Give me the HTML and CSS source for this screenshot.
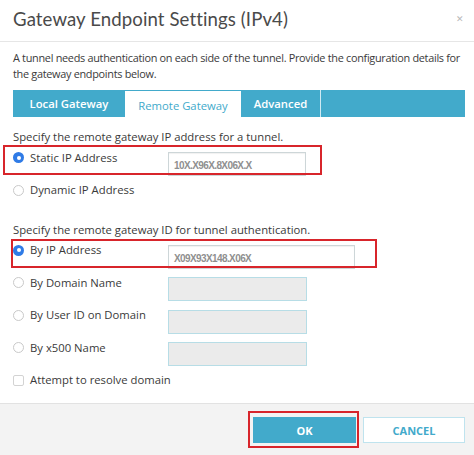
FILE: index.html
```html
<!DOCTYPE html>
<html>
<head>
<meta charset="utf-8">
<link rel="stylesheet" href="styles.css">
</head>
<body>
<div class="dialog">
  <div class="header">
    <h1 class="title">Gateway Endpoint Settings (IPv4)</h1>
    <span class="close">&#x2715;</span>
  </div>
  <div class="content">
    <p class="intro">A tunnel needs authentication on each side of the tunnel. Provide the configuration details for the gateway endpoints below.</p>
    <div class="tabs">
      <div class="tab tab-local">Local Gateway</div>
      <div class="tab tab-active">Remote Gateway</div>
      <div class="tab tab-adv">Advanced</div>
      <div class="tab-fill"></div>
    </div>

    <p class="section-label">Specify the remote gateway IP address for a tunnel.</p>
    <div class="row">
      <div class="mark mark-a"></div>
      <span class="radio checked"></span>
      <span class="label">Static IP Address</span>
      <div class="input filled w138"><span class="masked">10X.X96X.8X06X.X</span></div>
    </div>
    <div class="row">
      <span class="radio"></span>
      <span class="label">Dynamic IP Address</span>
    </div>

    <p class="section-label">Specify the remote gateway ID for tunnel authentication.</p>
    <div class="row">
      <div class="mark mark-b"></div>
      <span class="radio checked"></span>
      <span class="label">By IP Address</span>
      <div class="input filled w187"><span class="masked">X09X93X148.X06X</span></div>
    </div>
    <div class="row">
      <span class="radio"></span>
      <span class="label">By Domain Name</span>
      <div class="input disabled w139"></div>
    </div>
    <div class="row">
      <span class="radio"></span>
      <span class="label">By User ID on Domain</span>
      <div class="input disabled w139"></div>
    </div>
    <div class="row">
      <span class="radio"></span>
      <span class="label">By x500 Name</span>
      <div class="input disabled w139"></div>
    </div>
    <div class="row check-row">
      <span class="checkbox"></span>
      <span class="label label-wide">Attempt to resolve domain</span>
    </div>
  </div>
  <div class="footer">
    <div class="btn-wrap">
      <div class="mark mark-c"></div>
      <button class="btn btn-ok">OK</button>
    </div>
    <button class="btn btn-cancel">CANCEL</button>
  </div>
</div>
</body>
</html>
```

FILE: styles.css
```css
* { box-sizing: border-box; }
html, body { margin: 0; padding: 0; background: #fff; }
body {
  font-family: "Open Sans", "Liberation Sans", sans-serif;
  color: #3a3a3a;
  width: 474px;
  height: 455px;
  overflow: hidden;
}
.dialog { width: 474px; height: 455px; display: flex; flex-direction: column; }

.header {
  height: 42px;
  flex: none;
  border-bottom: 1px solid #e6e6e6;
  display: flex;
  align-items: center;
  justify-content: space-between;
  padding: 0 10px 4px 13px;
}
.title {
  margin: 0;
  font-family: "Lato", "Open Sans", sans-serif;
  font-weight: 400;
  font-size: 18.6px;
  color: #4a4a4a;
  letter-spacing: 0.1px;
}
.close { font-size: 9px; color: #b8b8b8; }

.content { padding: 0 9px 0 13px; flex: 1; min-height: 0; }
.intro {
  margin: 8px 0 0;
  font-size: 10.9px;
  letter-spacing: -0.3px;
  line-height: 16px;
  color: #3a3a3a;
}

.tabs {
  margin-top: 8px;
  height: 27px;
  display: flex;
  background: #42aacb;
}
.tab {
  height: 27px;
  display: flex;
  align-items: center;
  justify-content: center;
  font-size: 11.3px;
  font-weight: 600;
  color: #fff;
}
.tab-local { width: 112px; }
.tab-active {
  width: 116px;
  background: #fff;
  color: #42aacb;
  font-weight: 400;
  border-top: 1px solid #42aacb;
  padding-top: 2px;
}
.tab-adv { width: 80px; border-right: 1px solid #cfeaf3; }
.tab-fill { flex: 1; }

.section-label {
  margin: 12px 0 7px;
  font-size: 11.3px;
  line-height: 16px;
  color: #3a3a3a;
}

.row {
  position: relative;
  height: 25px;
  margin-bottom: 7.5px;
  display: flex;
  align-items: flex-start;
}
.check-row { margin-bottom: 0; }
.radio {
  width: 11px;
  height: 11px;
  border-radius: 50%;
  border: 1px solid #c9c9c9;
  background: #fff;
  flex: none;
}
.radio.checked {
  border: none;
  background: #2f7be6;
  position: relative;
}
.radio.checked::after {
  content: "";
  position: absolute;
  left: 3.5px; top: 3.5px;
  width: 4px; height: 4px;
  border-radius: 50%;
  background: #fff;
}
.checkbox {
  width: 11px;
  height: 11px;
  border: 1px solid #d3d3d3;
  border-radius: 2px;
  background: #fff;
  flex: none;
}
.label {
  font-size: 11.3px;
  line-height: 14px;
  margin-top: -1.5px;
  margin-left: 6px;
  width: 138px;
  color: #3a3a3a;
  white-space: nowrap;
}
.label-wide { width: auto; }
.input {
  height: 24px;
  display: flex;
  align-items: center;
  padding-left: 5px;
}
.input.filled {
  background: #fff;
  border: 1px solid #cdd6d8;
  box-shadow: inset 0 1px 1px rgba(0,0,0,0.06);
}
.input.disabled {
  background: #ebebeb;
  border: 1px solid #b7dde6;
}
.w138 { width: 138px; }
.w139 { width: 139px; }
.w187 { width: 187px; }
.masked {
  font-family: "Liberation Sans", sans-serif;
  font-size: 10px;
  font-weight: 700;
  color: #8f8f8f;
  letter-spacing: -0.6px;
  padding-top: 3px;
}

.mark {
  position: absolute;
  border: 2px solid #d8252b;
  pointer-events: none;
}
.mark-a { left: -10px; top: -7px; width: 319px; height: 30px; }
.mark-b { left: -2px; top: -6px; width: 366px; height: 29px; }
.mark-c { left: -5px; top: -6px; width: 111px; height: 37px; }

.footer {
  height: 52px;
  flex: none;
  border-top: 1px solid #e2e2e2;
  background: #f3f3f3;
  display: flex;
  justify-content: flex-end;
  align-items: flex-start;
  padding: 13px 9px 0 0;
  gap: 7px;
}
.btn-wrap { position: relative; }
.btn {
  display: block;
  height: 26px;
  font-family: "Open Sans", "Liberation Sans", sans-serif;
  font-size: 11px;
  font-weight: 700;
  border: 1px solid #42aacb;
  cursor: pointer;
  padding: 0;
}
.btn-ok { width: 103px; background: #42aacb; color: #fff; }
.btn-cancel { width: 102px; background: #fff; color: #42aacb; border-color: #bfe3ee; }
```
